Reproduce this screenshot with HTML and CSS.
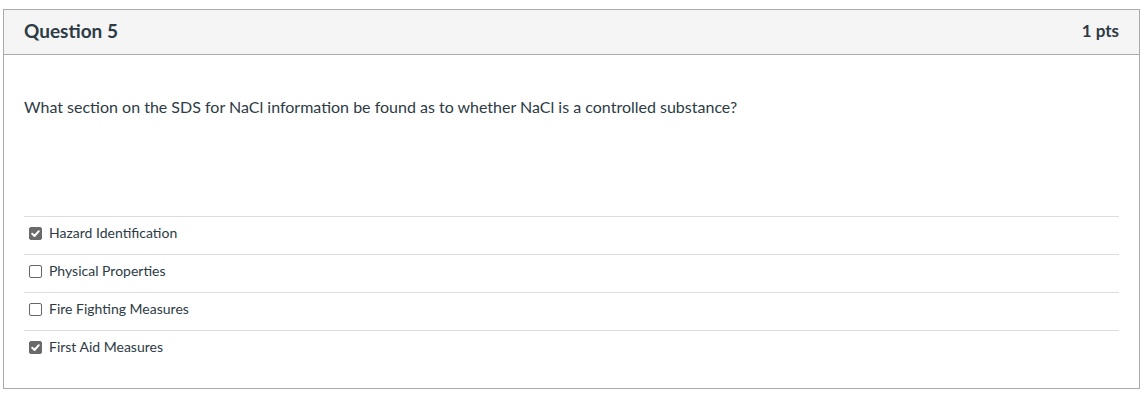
FILE: index.html
```html
<!DOCTYPE html>
<html>
<head>
<meta charset="utf-8">
<link rel="stylesheet" href="styles.css">
</head>
<body>
<div class="question">
  <div class="header">
    <span class="title">Question 5</span>
    <span class="pts">1 pts</span>
  </div>
  <div class="content">
    <p class="text">What section on the SDS for NaCl information be found as to whether NaCl is a controlled substance?</p>
    <div class="answers">
      <label class="answer"><span class="box checked"><svg viewBox="0 0 13 13" width="13" height="13"><path d="M3.2 6.8 L5.5 9 L9.8 4.2" fill="none" stroke="#fff" stroke-width="2" stroke-linecap="round" stroke-linejoin="round"/></svg></span><span class="label">Hazard Identification</span></label>
      <label class="answer"><span class="box"></span><span class="label">Physical Properties</span></label>
      <label class="answer"><span class="box"></span><span class="label">Fire Fighting Measures</span></label>
      <label class="answer"><span class="box checked"><svg viewBox="0 0 13 13" width="13" height="13"><path d="M3.2 6.8 L5.5 9 L9.8 4.2" fill="none" stroke="#fff" stroke-width="2" stroke-linecap="round" stroke-linejoin="round"/></svg></span><span class="label">First Aid Measures</span></label>
    </div>
  </div>
</div>
</body>
</html>
```

FILE: styles.css
```css
html, body {
  margin: 0;
  padding: 0;
  background: #fff;
}
body {
  font-family: Lato, "Liberation Sans", sans-serif;
  color: #2d3b45;
}
.question {
  margin: 9px 0 0 3px;
  width: 1135px;
  height: 378px;
  border: 1px solid #aaaaaa;
  box-sizing: content-box;
}
.header {
  display: flex;
  justify-content: space-between;
  align-items: center;
  height: 44px;
  padding: 0 20px;
  background: #f5f5f5;
  border-bottom: 1px solid #aaaaaa;
}
.title {
  font-size: 19px;
  font-weight: 700;
  margin-top: -4px;
}
.pts {
  font-size: 17px;
  font-weight: 700;
  color: #2d3b45;
  margin-top: -4px;
}
.content {
  padding: 0 20px;
}
.text {
  margin: 0;
  padding-top: 41px;
  height: 161px;
  box-sizing: border-box;
  font-size: 16px;
  line-height: 22px;
}
.answers {
  display: flex;
  flex-direction: column;
}
.answer {
  display: flex;
  align-items: center;
  height: 38px;
  border-top: 1px solid #dddddd;
  box-sizing: border-box;
  font-size: 14px;
}
.box {
  width: 13px;
  height: 13px;
  box-sizing: border-box;
  border: 1px solid #666666;
  border-radius: 2px;
  margin-left: 5px;
  margin-right: 7px;
  margin-top: -5px;
  display: flex;
  background: #fff;
}
.box.checked {
  background: #6a6a6a;
  border-color: #6a6a6a;
}
.box svg {
  margin: -1px;
}
.label {
  margin-top: -7px;
}
```
